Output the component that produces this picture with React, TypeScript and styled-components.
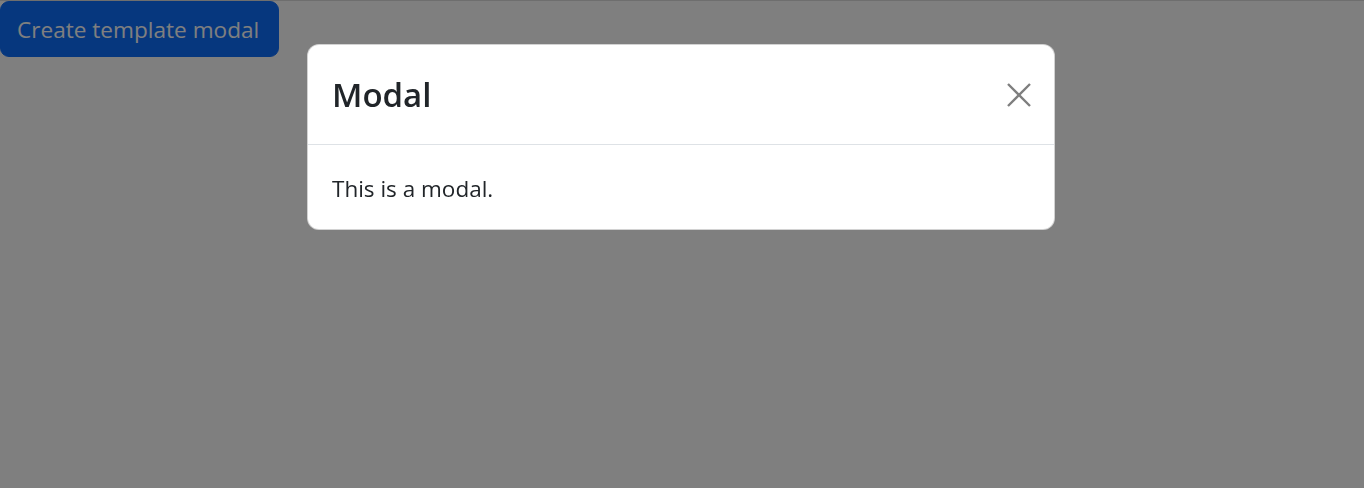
import styled, { createGlobalStyle } from "styled-components";

const GlobalStyle = createGlobalStyle`
  html, body {
    margin: 0;
    padding: 0;
    height: 100%;
    background: #ffffff;
    font-family: "Open Sans", "Noto Sans", "Liberation Sans", sans-serif;
  }
`;

const Page = styled("div")`
  min-height: 488px;
  border-top: 1px solid #dcdcdc;
  box-sizing: border-box;
`;

const LaunchButton = styled("button")`
  display: inline-block;
  font-family: inherit;
  font-size: 22.6px;
  line-height: 36px;
  padding: 10px 19px 8px 16px;
  border: 1px solid #0d6efd;
  border-radius: 9px;
  background: #0d6efd;
  color: #ffffff;
  cursor: pointer;
`;

const Backdrop = styled("div")`
  position: fixed;
  inset: 0;
  background: rgba(0, 0, 0, 0.5);
  display: flex;
  justify-content: center;
  align-items: flex-start;
  padding: 44px 2px 0 0;
`;

const Dialog = styled("div")`
  width: 748px;
  background: #ffffff;
  border: 1px solid rgba(0, 0, 0, 0.175);
  border-radius: 12px;
  box-sizing: border-box;
  color: #212529;
  overflow: hidden;
`;

const Header = styled("div")`
  height: 100px;
  box-sizing: border-box;
  display: flex;
  align-items: center;
  justify-content: space-between;
  padding: 0 19px 0 24px;
  border-bottom: 1px solid #dee2e6;
`;

const Title = styled("h5")`
  margin: 0;
  font-size: 33px;
  font-weight: 600;
  line-height: 1.5;
`;

const CloseButton = styled("button")`
  width: 32px;
  height: 32px;
  padding: 0;
  border: 0;
  background: transparent;
  display: flex;
  align-items: center;
  justify-content: center;
  opacity: 0.5;
  cursor: pointer;
`;

const Body = styled("div")`
  height: 84px;
  box-sizing: border-box;
  display: flex;
  align-items: center;
  padding: 2px 24px 0;
  font-size: 22.5px;
`;

const CloseIcon = () => (
  <svg width="24" height="24" viewBox="0 0 24 24" fill="none">
    <path d="M1 1L23 23M23 1L1 23" stroke="#000" strokeWidth="2.4" />
  </svg>
);

const App = () => {
  return (
    <Page>
      <GlobalStyle />
      <LaunchButton>Create template modal</LaunchButton>
      <Backdrop>
        <Dialog>
          <Header>
            <Title>Modal</Title>
            <CloseButton aria-label="Close">
              <CloseIcon />
            </CloseButton>
          </Header>
          <Body>This is a modal.</Body>
        </Dialog>
      </Backdrop>
    </Page>
  );
};

export default App;
